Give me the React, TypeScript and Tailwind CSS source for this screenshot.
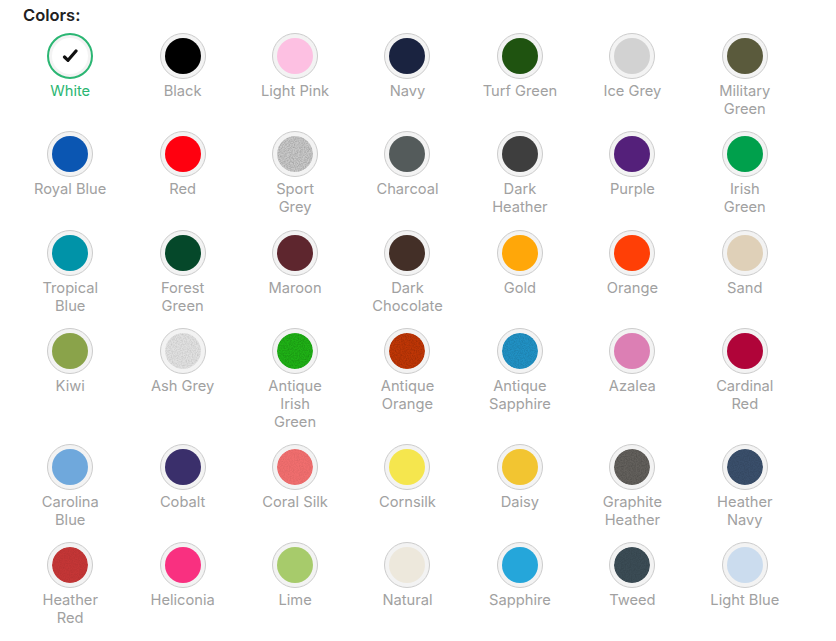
import React from "react";

type Color = { name: string; hex: string; grain?: number };

const colors: Color[] = [
  { name: "White", hex: "#ffffff" },
  { name: "Black", hex: "#000000" },
  { name: "Light Pink", hex: "#fdc0e2" },
  { name: "Navy", hex: "#1a2340" },
  { name: "Turf Green", hex: "#1f5310" },
  { name: "Ice Grey", hex: "#d2d2d2" },
  { name: "Military\nGreen", hex: "#5a5a3c" },
  { name: "Royal Blue", hex: "#0b56b2" },
  { name: "Red", hex: "#ff000f" },
  { name: "Sport\nGrey", hex: "#c8c8c8", grain: 0.22 },
  { name: "Charcoal", hex: "#545b5b" },
  { name: "Dark\nHeather", hex: "#3e3e3e" },
  { name: "Purple", hex: "#54207a" },
  { name: "Irish\nGreen", hex: "#00a04c" },
  { name: "Tropical\nBlue", hex: "#0093a8" },
  { name: "Forest\nGreen", hex: "#05482a" },
  { name: "Maroon", hex: "#5e262e" },
  { name: "Dark\nChocolate", hex: "#432f27" },
  { name: "Gold", hex: "#ffa709" },
  { name: "Orange", hex: "#ff3f06" },
  { name: "Sand", hex: "#dfd0b8" },
  { name: "Kiwi", hex: "#8aa34a" },
  { name: "Ash Grey", hex: "#e0e0e0", grain: 0.12 },
  { name: "Antique\nIrish\nGreen", hex: "#1fb116", grain: 0.2 },
  { name: "Antique\nOrange", hex: "#bf3606", grain: 0.2 },
  { name: "Antique\nSapphire", hex: "#2191c4", grain: 0.15 },
  { name: "Azalea", hex: "#dc7fb4" },
  { name: "Cardinal\nRed", hex: "#b00439" },
  { name: "Carolina\nBlue", hex: "#6fa8dc" },
  { name: "Cobalt", hex: "#3a2f6b" },
  { name: "Coral Silk", hex: "#f06e6e", grain: 0.08 },
  { name: "Cornsilk", hex: "#f5e64e" },
  { name: "Daisy", hex: "#f2c531" },
  { name: "Graphite\nHeather", hex: "#63605c", grain: 0.2 },
  { name: "Heather\nNavy", hex: "#3a4f6b", grain: 0.12 },
  { name: "Heather\nRed", hex: "#c43636", grain: 0.08 },
  { name: "Heliconia", hex: "#f93080" },
  { name: "Lime", hex: "#a7cb6b" },
  { name: "Natural", hex: "#ede8dc" },
  { name: "Sapphire", hex: "#25a6da" },
  { name: "Tweed", hex: "#3b4c55", grain: 0.12 },
  { name: "Light Blue", hex: "#cbdcee" },
];

const Swatch = ({ color, index }: { color: Color; index: number }) => {
  if (!color.grain) {
    return <div className="h-9 w-9 rounded-full" style={{ backgroundColor: color.hex }} />;
  }
  // fabric texture on the heathered colours
  const id = "grain" + index;
  return (
    <svg width="36" height="36" viewBox="0 0 36 36" className="rounded-full">
      <filter id={id}>
        <feTurbulence type="fractalNoise" baseFrequency="0.8" numOctaves="2" seed={index} />
        <feColorMatrix values="0 0 0 0 0  0 0 0 0 0  0 0 0 0 0  1.6 0 0 0 -0.55" />
      </filter>
      <circle cx="18" cy="18" r="18" fill={color.hex} />
      <circle cx="18" cy="18" r="18" filter={`url(#${id})`} opacity={color.grain} />
    </svg>
  );
};

const App = () => {
  return (
    <div className="h-[641px] w-[836px] overflow-hidden bg-white font-['Inter','Liberation_Sans',sans-serif]">
      <div className="pl-[23px] pt-[4px] text-[16.5px] font-semibold leading-[22px] text-[#222222]">Colors:</div>
      <div className="ml-[14px] mt-[7px] grid w-[787px] grid-cols-7 gap-y-[13.3px]">
        {colors.map((color, i) => {
          const selected = i === 0;
          return (
            <div key={color.name} className="flex flex-col items-center">
              <div
                className={
                  selected
                    ? "flex h-[46px] w-[46px] items-center justify-center rounded-full border-2 border-[#2bb673] bg-[#f3f3f3]"
                    : "flex h-[46px] w-[46px] items-center justify-center rounded-full border border-[#cccccc] bg-[#f3f3f3]"
                }
              >
                {selected ? (
                  <div className="flex h-9 w-9 items-center justify-center rounded-full bg-white">
                    <svg width="16" height="16" viewBox="0 0 16 16" fill="none">
                      <path
                        d="M2.5 9 L6 12.3 L14 3"
                        stroke="#111111"
                        strokeWidth="3.2"
                        strokeLinecap="round"
                        strokeLinejoin="round"
                      />
                    </svg>
                  </div>
                ) : (
                  <Swatch color={color} index={i} />
                )}
              </div>
              <div
                className={
                  selected
                    ? "mt-[3px] min-h-9 whitespace-pre-line text-center text-[14.7px] leading-[18px] text-[#2bb673]"
                    : "mt-[3px] min-h-9 whitespace-pre-line text-center text-[14.7px] leading-[18px] text-[#a1a1a1]"
                }
              >
                {color.name}
              </div>
            </div>
          );
        })}
      </div>
    </div>
  );
};

export default App;
